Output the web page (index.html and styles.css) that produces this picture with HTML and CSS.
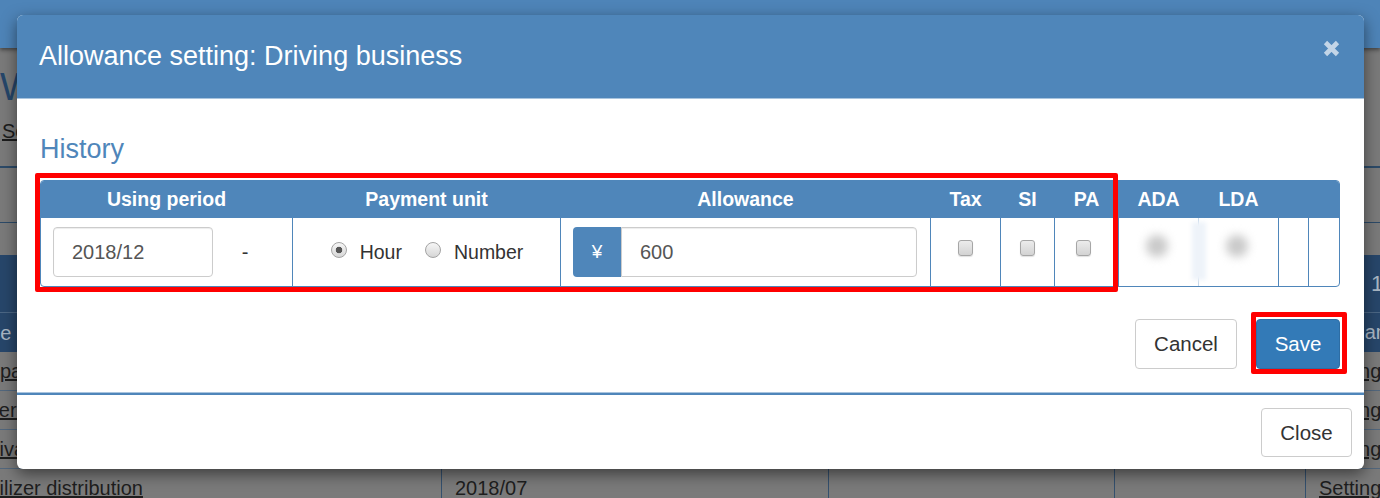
FILE: index.html
```html
<!DOCTYPE html>
<html lang="en">
<head>
<meta charset="utf-8">
<title>Allowance setting: Driving business</title>
<link rel="stylesheet" href="styles.css">
</head>
<body>
<div class="page">
  <div class="topbar"></div>
  <div class="page-title">Work settings</div>
  <div class="page-link"><a href="#">Settings list</a></div>
  <div class="rule rule-1"></div>
  <div class="rule rule-2"></div>
  <div class="bg-head">
    <div class="bg-row bg-head-1">
      <div class="bg-cell"></div><div class="bg-cell"></div><div class="bg-cell"></div><div class="bg-cell"></div>
      <div class="bg-cell bg-num">12</div>
    </div>
    <div class="bg-row bg-head-2">
      <div class="bg-cell"><span class="cut-name">Name</span></div><div class="bg-cell"></div><div class="bg-cell"></div><div class="bg-cell"></div>
      <div class="bg-cell bg-manage">Management</div>
    </div>
  </div>
  <div class="bg-body">
    <div class="bg-row bg-item">
      <div class="bg-cell"><a href="#" class="cut cut-1">Dispatch work</a></div>
      <div class="bg-cell">2018/07</div><div class="bg-cell"></div><div class="bg-cell"></div>
      <div class="bg-cell"><a href="#">Setting</a></div>
    </div>
    <div class="bg-row bg-item">
      <div class="bg-cell"><a href="#" class="cut cut-2">Watering</a></div>
      <div class="bg-cell">2018/07</div><div class="bg-cell"></div><div class="bg-cell"></div>
      <div class="bg-cell"><a href="#">Setting</a></div>
    </div>
    <div class="bg-row bg-item">
      <div class="bg-cell"><a href="#" class="cut cut-3">Cultivation</a></div>
      <div class="bg-cell">2018/07</div><div class="bg-cell"></div><div class="bg-cell"></div>
      <div class="bg-cell"><a href="#">Setting</a></div>
    </div>
    <div class="bg-row bg-item">
      <div class="bg-cell"><a href="#" class="cut cut-4">Fertilizer distribution</a></div>
      <div class="bg-cell">2018/07</div><div class="bg-cell"></div><div class="bg-cell"></div>
      <div class="bg-cell"><a href="#">Setting</a></div>
    </div>
  </div>
</div>

<div class="modal">
  <div class="modal-header">
    <h4 class="modal-title">Allowance setting: Driving business</h4>
    <button class="modal-close" aria-label="Close">
      <svg width="17" height="17" viewBox="0 0 17 17"><path d="M2.5 2.5 L14.5 14.5 M14.5 2.5 L2.5 14.5" stroke="#fff" stroke-width="4.6" fill="none"/></svg>
    </button>
  </div>
  <div class="modal-body">
    <h3 class="section-title">History</h3>
    <div class="history-wrap">
      <div class="history-box">
        <table class="history">
          <colgroup>
            <col class="c-period"><col class="c-unit"><col class="c-allow"><col class="c-tax"><col class="c-si"><col class="c-pa"><col class="c-ada"><col class="c-lda"><col class="c-x1"><col class="c-x2">
          </colgroup>
          <thead>
            <tr>
              <th>Using period</th>
              <th>Payment unit</th>
              <th>Allowance</th>
              <th>Tax</th>
              <th>SI</th>
              <th>PA</th>
              <th>ADA</th>
              <th>LDA</th>
              <th></th>
              <th></th>
            </tr>
          </thead>
          <tbody>
            <tr>
              <td class="td-period">
                <div class="period">
                  <input class="form-control period-input" type="text" value="2018/12" readonly>
                  <span class="dash">-</span>
                </div>
              </td>
              <td class="td-unit">
                <div class="radios">
                  <label class="radio-label"><input type="radio" name="unit" checked>Hour</label>
                  <label class="radio-label"><input type="radio" name="unit">Number</label>
                </div>
              </td>
              <td class="td-allow">
                <div class="input-group">
                  <span class="addon">¥</span>
                  <input class="form-control group-input" type="text" value="600" readonly>
                </div>
              </td>
              <td class="td-check"><input type="checkbox"></td>
              <td class="td-check"><input type="checkbox"></td>
              <td class="td-check td-pa"><input type="checkbox"></td>
              <td class="td-blur"><span class="blur-dot"></span></td>
              <td class="td-blur td-lda"><span class="blur-dot"></span></td>
              <td></td>
              <td></td>
            </tr>
          </tbody>
        </table>
      </div>
      <div class="highlight hl-table"></div>
    </div>
    <div class="actions">
      <button class="btn btn-default btn-cancel">Cancel</button>
      <div class="save-wrap">
        <button class="btn btn-primary">Save</button>
        <div class="highlight hl-save"></div>
      </div>
    </div>
  </div>
  <div class="modal-footer">
    <button class="btn btn-default btn-close">Close</button>
  </div>
</div>
</body>
</html>
```

FILE: styles.css
```css
* { box-sizing: border-box; }

html, body {
  margin: 0;
  padding: 0;
}

body {
  width: 1380px;
  height: 498px;
  overflow: hidden;
  position: relative;
  background: #7a7a7a;
  font-family: "Liberation Sans", Arial, sans-serif;
  color: #333;
}

/* ---------- dimmed page behind the dialog ---------- */
.page {
  height: 498px;
  overflow: hidden;
}

.topbar {
  height: 48px;
  background: #4e84b8;
  box-shadow: 0 2px 4px rgba(0, 0, 0, .45);
}

.page-title {
  margin-top: 17px;
  font-size: 38px;
  line-height: 44px;
  color: #25466a;
  white-space: nowrap;
}

.page-link {
  margin-top: 10px;
  padding-left: 2px;
  font-size: 20px;
  line-height: 24px;
}

.page-link a {
  color: #1c1c1c;
  text-decoration: underline;
}

.rule { background: #2c4a68; }
.rule-1 { margin-top: 23px; height: 2px; }
.rule-2 { margin-top: 54px; height: 1px; }

.bg-head {
  margin-top: 32px;
  background: #27466a;
  color: #a9b6c3;
  font-size: 22px;
}

.bg-row {
  display: grid;
  grid-template-columns: 441px 387px 286px 191px 115px;
  width: 1420px;
}

.bg-head-1 {
  height: 58px;
  border-bottom: 1px solid #4b6684;
  align-items: center;
}

.bg-head-2 {
  height: 39px;
  align-items: center;
}

.bg-num { padding-left: 66px; }
.bg-manage { padding-left: 43px; font-size: 20px; }
.cut-name { display: inline-block; margin-left: -42px; font-size: 20px; }

.bg-item {
  height: 39px;
  border-bottom: 1px solid #52677d;
  font-size: 20px;
  color: #1e1e1e;
}

.bg-item .bg-cell {
  display: flex;
  align-items: center;
  border-left: 1px solid #34506e;
  padding-left: 13px;
  white-space: nowrap;
  overflow: hidden;
}

.bg-item .bg-cell:first-child {
  border-left: 0;
  padding-left: 0;
  overflow: visible;
}

.bg-item a {
  color: #1e1e1e;
  text-decoration: underline;
}

.cut { display: inline-block; }
.cut-1 { margin-left: -29px; }
.cut-2 { margin-left: -36px; }
.cut-3 { margin-left: -36px; }
.cut-4 { margin-left: -36px; }

/* ---------- dialog ---------- */
.modal {
  position: absolute;
  left: 17px;
  top: 15px;
  width: 1347px;
  background: #fff;
  border-radius: 6px;
  box-shadow: 0 5px 15px rgba(0, 0, 0, .5);
  overflow: hidden;
}

.modal-header {
  display: flex;
  justify-content: space-between;
  align-items: flex-start;
  height: 84px;
  padding: 26px 24px 0 22px;
  background: #4f86ba;
  border-bottom: 1px solid #a9c4de;
}

.modal-title {
  margin: 0;
  font-size: 27px;
  line-height: 30px;
  font-weight: normal;
  color: #fff;
  white-space: nowrap;
}

.modal-close {
  margin: -1px 0 0 0;
  padding: 0;
  width: 17px;
  height: 17px;
  border: 0;
  background: transparent;
  opacity: .66;
  display: block;
}

.modal-close svg { display: block; }

.modal-body {
  padding: 35px 24px 24px 23px;
}

.section-title {
  margin: 0;
  font-size: 27px;
  line-height: 30px;
  font-weight: normal;
  color: #4f86ba;
}

.history-wrap {
  position: relative;
  margin-top: 16px;
}

.history-box {
  border: 1px solid #4f86ba;
  border-radius: 4px;
  overflow: hidden;
}

.history {
  width: 1298px;
  table-layout: fixed;
  border-collapse: separate;
  border-spacing: 0;
}

.c-period { width: 251px; }
.c-unit { width: 268px; }
.c-allow { width: 370px; }
.c-tax { width: 70px; }
.c-si { width: 54px; }
.c-pa { width: 64px; }
.c-ada { width: 80px; }
.c-lda { width: 80px; }
.c-x1 { width: 30px; }
.c-x2 { width: 31px; }

.history th,
.history td {
  border-left: 1px solid #4f86ba;
  padding: 0;
}

.history th:first-child,
.history td:first-child {
  border-left: 0;
}

.history th {
  height: 37px;
  background: #4f86ba;
  color: #fff;
  font-size: 19.5px;
  font-weight: bold;
  text-align: center;
  line-height: 37px;
  white-space: nowrap;
}

.history td {
  height: 68px;
  vertical-align: middle;
  font-size: 19.5px;
}

.td-period { padding: 0 12px !important; }

.period {
  display: flex;
  align-items: center;
}

.form-control {
  height: 50px;
  border: 1px solid #ccc;
  border-radius: 4px;
  font-family: "Liberation Sans", Arial, sans-serif;
  font-size: 20px;
  color: #555;
  padding: 0 18px;
  background: #fff;
  box-shadow: inset 0 1px 1px rgba(0, 0, 0, .075);
  outline: none;
}

.period-input { width: 160px; }

.dash {
  width: 64px;
  text-align: center;
  font-size: 20px;
  color: #333;
}

.radios {
  display: flex;
  justify-content: center;
  align-items: center;
  gap: 23px;
  padding-left: 1px;
}

.radio-label {
  display: flex;
  align-items: center;
  color: #333;
  font-size: 19.5px;
}

.radio-label input {
  appearance: none;
  -webkit-appearance: none;
  width: 16px;
  height: 16px;
  margin: 0 13px 0 0;
  border: 1px solid #a3a3a3;
  border-radius: 50%;
  background: linear-gradient(#f6f6f6, #d6d6d6);
  position: relative;
  top: -2px;
}

.radio-label input:checked {
  background: radial-gradient(circle, #555 0 3px, rgba(85, 85, 85, 0) 3.6px), linear-gradient(#f6f6f6, #d6d6d6);
}

.td-allow { padding: 0 12px !important; }

.input-group {
  display: flex;
  width: 344px;
}

.addon {
  width: 48px;
  height: 50px;
  display: flex;
  align-items: center;
  justify-content: center;
  background: #4f86ba;
  color: #fff;
  font-size: 19px;
  border-radius: 4px 0 0 4px;
}

.group-input {
  flex: 1;
  min-width: 0;
  border-radius: 0 4px 4px 0;
}

.td-check {
  text-align: center;
  vertical-align: top !important;
  padding-top: 20px !important;
}

.td-pa { padding-right: 6px !important; }

.td-check input {
  appearance: none;
  -webkit-appearance: none;
  display: inline-block;
  width: 15px;
  height: 16px;
  margin: 0;
  border: 1px solid #a6a6a6;
  border-radius: 3px;
  background: linear-gradient(#ececec, #d3d3d3);
  box-shadow: 0 1px 1px rgba(0, 0, 0, .12);
}

.td-blur {
  position: relative;
  text-align: center;
  vertical-align: top !important;
  padding-top: 17px !important;
}

.td-lda { border-left-color: #c7d8ea !important; }

.td-lda::before {
  content: "";
  position: absolute;
  left: -7px;
  top: 4px;
  bottom: 6px;
  width: 14px;
  background: #eef3f9;
  filter: blur(2px);
}

.blur-dot {
  display: inline-block;
  width: 22px;
  height: 22px;
  border-radius: 50%;
  background: #c9c9c9;
  filter: blur(5px);
}

.td-blur .blur-dot { margin-left: -4px; }

.highlight {
  position: absolute;
  border: 5px solid #ff0000;
  border-radius: 2px;
  pointer-events: none;
}

.hl-table {
  left: -5px;
  top: -7px;
  width: 1083px;
  height: 119px;
}

.actions {
  display: flex;
  justify-content: flex-end;
  align-items: center;
  gap: 19px;
  margin-top: 32px;
}

.save-wrap { position: relative; }

.btn {
  display: block;
  height: 50px;
  padding: 0 19px;
  border: 1px solid #ccc;
  border-radius: 4px;
  background: #fff;
  color: #333;
  font-family: "Liberation Sans", Arial, sans-serif;
  font-size: 20.5px;
  line-height: 48px;
}

.btn-cancel {
  width: 102px;
  padding: 0;
}

.btn-primary {
  width: 84px;
  padding: 0;
  background: #337ab7;
  border-color: #2e6da4;
  color: #fff;
}

.hl-save {
  left: -5px;
  top: -7px;
  right: -7px;
  bottom: -5px;
}

.modal-footer {
  display: flex;
  justify-content: flex-end;
  padding: 13px 12px 12px 0;
  border-top: 2px solid #4f86ba;
  box-shadow: 0 -1px 0 #a9c4de;
}

.btn-close {
  width: 91px;
  height: 49px;
  padding: 0;
}
```
